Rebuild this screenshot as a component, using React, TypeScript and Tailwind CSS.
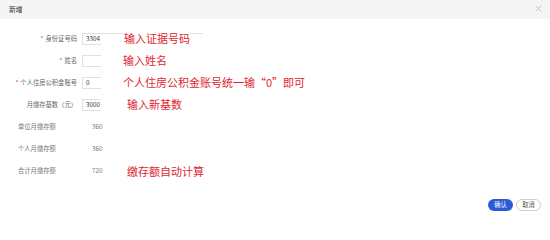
const font = "font-['Noto_Sans_CJK_SC','Noto_Sans',sans-serif]";

type FormRow = {
  label: string;
  required: boolean;
  value: string;
  note: string;
  noteLeft: string;
  peek?: boolean;
};

const formRows: FormRow[] = [
  { label: "身份证号码", required: true, value: "3304", note: "输入证据号码", noteLeft: "left-[42px]", peek: true },
  { label: "姓名", required: true, value: "", note: "输入姓名", noteLeft: "left-[41px]" },
  { label: "个人住房公积金账号", required: true, value: "0", note: "个人住房公积金账号统一输“0”即可", noteLeft: "left-[41px]" },
  { label: "月缴存基数（元）", required: false, value: "3000", note: "输入新基数", noteLeft: "left-[45px]" },
];

const amountRows = [
  { label: "单位月缴存额", value: "360", note: "" },
  { label: "个人月缴存额", value: "360", note: "" },
  { label: "合计月缴存额", value: "720", note: "缴存额自动计算" },
];

export default function App() {
  return (
    <div className={`flex h-[218px] w-[550px] flex-col bg-white ${font}`}>
      <div className="flex h-[19px] items-center justify-between bg-[#f5f5f5] pl-[9px] pr-[8px]">
        <span className="text-[6.8px] text-[#333]">新增</span>
        <svg width="7" height="7" viewBox="0 0 7 7" className="mb-[3px]">
          <path d="M0.5 0.5 L6.5 6.5 M6.5 0.5 L0.5 6.5" stroke="#b5b5b5" strokeWidth="0.8" />
        </svg>
      </div>

      <div className="flex flex-col pt-[9px]">
        {formRows.map((row) => (
          <div key={row.label} className="flex h-[22px] items-center">
            <div className="w-[77px] text-right text-[6.3px] text-[#666]">
              {row.required && <span className="mr-[2px] text-[#e5484d]">*</span>}
              {row.label}
            </div>
            <div className="relative ml-[5px] h-[12px] w-[121px]">
              <div className="flex h-full w-full items-center border border-[#e0e0e0] pl-[3px] text-[6.3px] text-[#333]">
                {row.value}
              </div>
              <div
                className={`absolute left-[19px] right-0 bg-white ${row.peek ? "top-[1px] bottom-[-1px]" : "top-[-1px] bottom-[-1px]"}`}
              />
              <span
                className={`absolute ${row.noteLeft} top-[-5px] whitespace-nowrap bg-white text-[11px] leading-[20px] text-[#e0262f]`}
              >
                {row.note}
              </span>
            </div>
          </div>
        ))}

        {amountRows.map((row) => (
          <div key={row.label} className="flex h-[22px] items-center">
            <div className="w-[92px] pl-[18px] text-[6.3px] text-[#777]">{row.label}</div>
            <div className="w-[11px] whitespace-nowrap text-[6.3px] text-[#777]">{row.value}</div>
            {row.note && (
              <span className="ml-[24px] whitespace-nowrap text-[11px] text-[#e0262f]">{row.note}</span>
            )}
          </div>
        ))}
      </div>

      <div className="mt-auto flex justify-end gap-[3px] pb-[7px] pr-[9px]">
        <button className="flex h-[12px] w-[25px] items-center justify-center rounded-full bg-[#2a5bd7] text-[6.3px] text-white">
          确认
        </button>
        <button className="flex h-[12px] w-[25px] items-center justify-center rounded-full border border-[#d0d0d0] bg-white text-[6.3px] text-[#555]">
          取消
        </button>
      </div>
    </div>
  );
}
